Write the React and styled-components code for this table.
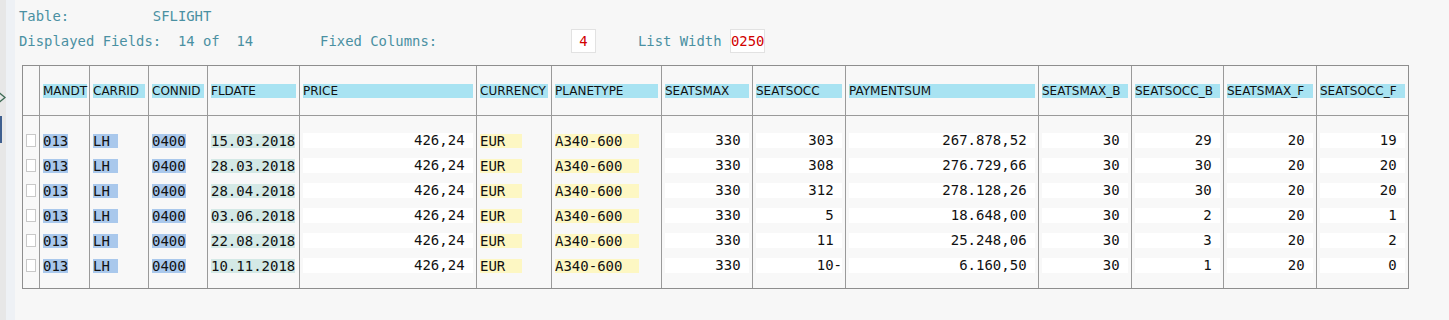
import React from "react";
import styled, { createGlobalStyle } from "styled-components";

const GlobalStyle = createGlobalStyle`
  html, body {
    margin: 0;
    padding: 0;
    background: #f7f7f7;
  }
  body {
    font-family: "DejaVu Sans Mono", monospace;
  }
`;

const Page = styled.div`
  display: flex;
  height: 320px;
  overflow: hidden;
`;

const Rail = styled.div`
  width: 15px;
  flex: none;
  display: flex;
  flex-direction: column;
  background: linear-gradient(to right, #e7e7e7 0 6px, #eef1f5 6px);
`;

const RailChevron = styled.svg`
  margin-top: 92px;
  width: 7px;
  height: 11px;
`;

const RailMarker = styled.div`
  margin-top: 13px;
  width: 2px;
  height: 27px;
  background: #3f5f8f;
`;

const Main = styled.div`
  flex: 1;
  padding-top: 3px;
`;

const InfoRow = styled.div`
  display: flex;
  align-items: center;
  height: 25px;
  padding-left: 4px;
  font-size: 13.9px;
  color: #4a90a2;
  white-space: pre;
`;

const Label = styled.span`
  width: ${(p) => p.$ch}ch;
  flex: none;
`;

const RedBox = styled.span`
  box-sizing: border-box;
  height: 24px;
  min-width: ${(p) => p.$min || 0}px;
  margin-right: ${(p) => p.$gap || 0}px;
  display: inline-flex;
  align-items: center;
  justify-content: center;
  background: #fff;
  border: 1px solid #e2e2e2;
  color: #d10000;
`;

const Table = styled.div`
  display: flex;
  width: fit-content;
  margin: 12px 0 0 7px;
  border: 1px solid #8e8e8e;
  background: #f8f8f8;
`;

const Column = styled.div`
  box-sizing: border-box;
  width: ${(p) => p.$w}px;
  display: flex;
  flex-direction: column;
  border-right: 1px solid #9a9a9a;
  &:last-child {
    border-right: none;
  }
`;

const HeaderCell = styled.div`
  box-sizing: border-box;
  height: 50px;
  display: flex;
  align-items: center;
  padding: 0 3px;
  border-bottom: 1px solid #9a9a9a;
`;

const HeaderLabel = styled.div`
  flex: 1;
  height: 14px;
  line-height: 14px;
  background: #a8e3f2;
  font-family: "DejaVu Sans", Verdana, sans-serif;
  font-size: 12px;
  color: #111;
  white-space: nowrap;
`;

const Body = styled.div`
  padding: 12px 0 10px;
`;

const Cell = styled.div`
  height: 25px;
  display: flex;
  align-items: center;
  padding: 0 3px;
  justify-content: ${(p) => (p.$center ? "center" : "flex-start")};
`;

const fieldColors = {
  key: "#a9c8ec",
  date: "#d4e9e6",
  text: "#fdf7c3",
};

const CharValue = styled.span`
  width: ${(p) => p.$len}ch;
  height: 14px;
  line-height: 14px;
  font-size: 14px;
  color: #111;
  background: ${(p) => fieldColors[p.$kind]};
  white-space: pre;
  overflow: hidden;
`;

const NumValue = styled.span`
  flex: 1;
  height: 15px;
  line-height: 15px;
  font-size: 14px;
  color: #111;
  background: #fff;
  text-align: right;
  white-space: pre;
`;

const Checkbox = styled.span`
  box-sizing: border-box;
  width: 12px;
  height: 13px;
  background: #fff;
  border: 1px solid #c8c8c8;
`;

const columns = [
  { name: "MANDT", w: 50, kind: "key", len: 3 },
  { name: "CARRID", w: 59, kind: "key", len: 3 },
  { name: "CONNID", w: 59, kind: "key", len: 4 },
  { name: "FLDATE", w: 92, kind: "date", len: 10 },
  { name: "PRICE", w: 177, kind: "num" },
  { name: "CURRENCY", w: 75, kind: "text", len: 5 },
  { name: "PLANETYPE", w: 110, kind: "text", len: 10 },
  { name: "SEATSMAX", w: 91, kind: "num" },
  { name: "SEATSOCC", w: 93, kind: "num" },
  { name: "PAYMENTSUM", w: 193, kind: "num" },
  { name: "SEATSMAX_B", w: 93, kind: "num" },
  { name: "SEATSOCC_B", w: 92, kind: "num" },
  { name: "SEATSMAX_F", w: 93, kind: "num" },
  { name: "SEATSOCC_F", w: 91, kind: "num" },
];

const rows = [
  ["013", "LH", "0400", "15.03.2018", "426,24", "EUR", "A340-600", "330", "303", "267.878,52", "30", "29", "20", "19"],
  ["013", "LH", "0400", "28.03.2018", "426,24", "EUR", "A340-600", "330", "308", "276.729,66", "30", "30", "20", "20"],
  ["013", "LH", "0400", "28.04.2018", "426,24", "EUR", "A340-600", "330", "312", "278.128,26", "30", "30", "20", "20"],
  ["013", "LH", "0400", "03.06.2018", "426,24", "EUR", "A340-600", "330", "5", "18.648,00", "30", "2", "20", "1"],
  ["013", "LH", "0400", "22.08.2018", "426,24", "EUR", "A340-600", "330", "11", "25.248,06", "30", "3", "20", "2"],
  ["013", "LH", "0400", "10.11.2018", "426,24", "EUR", "A340-600", "330", "10-", "6.160,50", "30", "1", "20", "0"],
];

// SAP puts the sign after the number, so positive values keep a blank there
const withSign = (v) => (v.endsWith("-") ? v : v + " ");

const App = () => (
  <>
    <GlobalStyle />
    <Page>
      <Rail>
        <RailChevron viewBox="0 0 7 11">
          <polyline points="-1,0.5 5,5.5 -1,10.5" fill="none" stroke="#3d6b55" strokeWidth="1.3" />
        </RailChevron>
        <RailMarker />
      </Rail>
      <Main>
        <InfoRow>
          <Label $ch={16}>Table:</Label>
          <span>SFLIGHT</span>
        </InfoRow>
        <InfoRow>
          <Label $ch={36}>Displayed Fields:  14 of  14</Label>
          <Label $ch={30}>Fixed Columns:</Label>
          <RedBox $min={25} $gap={42}>4</RedBox>
          <span>List Width </span>
          <RedBox>0250</RedBox>
        </InfoRow>

        <Table>
          <Column $w={17}>
            <HeaderCell />
            <Body>
              {rows.map((_, i) => (
                <Cell key={i} $center>
                  <Checkbox />
                </Cell>
              ))}
            </Body>
          </Column>
          {columns.map((col, c) => (
            <Column key={col.name} $w={col.w}>
              <HeaderCell>
                <HeaderLabel>{col.name}</HeaderLabel>
              </HeaderCell>
              <Body>
                {rows.map((row, i) => (
                  <Cell key={i}>
                    {col.kind === "num" ? (
                      <NumValue>{withSign(row[c])}</NumValue>
                    ) : (
                      <CharValue $kind={col.kind} $len={col.len}>
                        {row[c]}
                      </CharValue>
                    )}
                  </Cell>
                ))}
              </Body>
            </Column>
          ))}
        </Table>
      </Main>
    </Page>
  </>
);

export default App;
